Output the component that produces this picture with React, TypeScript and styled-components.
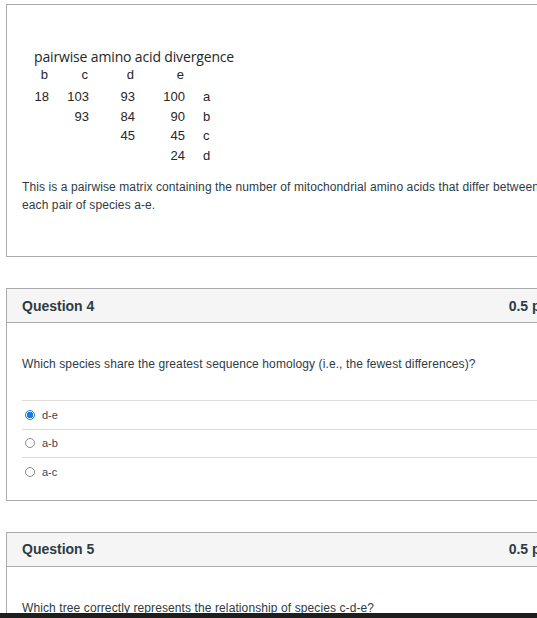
import styled, { createGlobalStyle } from 'styled-components';

const GlobalStyle = createGlobalStyle`
  body {
    margin: 0;
    background: #fff;
    overflow: hidden;
    font-family: "Liberation Sans", Arial, sans-serif;
    color: #2d3b45;
  }
`;

const Page = styled.div`
  padding: 4px 0 0 6px;
  width: 700px;
`;

const Card = styled.div`
  width: 562px;
  border: 1px solid #aaa;
  background: #fff;
  margin-bottom: 31px;
`;

const CardHeader = styled.div`
  display: flex;
  justify-content: space-between;
  align-items: center;
  height: 33px;
  padding: 0 16px 0 15px;
  background: #f5f5f5;
  border-bottom: 1px solid #aaa;
  font-size: 14px;
  font-weight: 700;
`;

const CardBody = styled.div<{ $top?: number; $bottom?: number }>`
  padding: ${(p) => p.$top ?? 32}px 16px ${(p) => p.$bottom ?? 15}px 15px;
`;

const Text = styled.p`
  margin: 0;
  font-size: 12px;
  line-height: 18px;
  letter-spacing: 0.1px;
`;

const Figure = styled.div`
  padding: 43px 0 0 6px;
  margin-bottom: 13px;
  color: #262626;
`;

const FigTitle = styled.div`
  font-family: "Open Sans", sans-serif;
  font-size: 14px;
  line-height: 18px;
  letter-spacing: -0.15px;
  padding-left: 6px;
`;

const Matrix = styled.div`
  display: grid;
  grid-template-columns: 21px 40px 46px 50px 30px;
  grid-template-rows: 21px repeat(4, 19.5px);
  font-size: 13px;
  align-items: center;
`;

const Head = styled.span`
  align-self: start;
  text-align: right;
  padding-right: 1px;
  line-height: 18px;
`;

const Num = styled.span`
  text-align: right;
  line-height: 19.5px;
`;

const RowLabel = styled.span`
  padding-left: 18px;
  line-height: 19.5px;
`;

const Options = styled.div`
  margin-top: 27px;
`;

const Option = styled.label`
  display: flex;
  align-items: center;
  gap: 7px;
  height: 27.5px;
  border-top: 1px solid #ddd;
  padding-left: 3px;
  font-size: 11px;
  color: #3b4650;
`;

const Radio = styled.span<{ $checked?: boolean }>`
  box-sizing: border-box;
  width: 10px;
  height: 10px;
  border-radius: 50%;
  border: 1px solid ${(p) => (p.$checked ? '#1b7ae5' : '#8a8a8a')};
  background: ${(p) =>
    p.$checked ? 'radial-gradient(circle, #1b7ae5 0 3px, #fff 3.5px)' : '#fff'};
`;

const BottomBar = styled.div`
  position: fixed;
  left: 0;
  right: 0;
  bottom: 0;
  height: 5px;
  background: #1e1e1e;
`;

const rows = [
  ['18', '103', '93', '100', 'a'],
  ['', '93', '84', '90', 'b'],
  ['', '', '45', '45', 'c'],
  ['', '', '', '24', 'd'],
];

const answers = [
  { label: 'd-e', checked: true },
  { label: 'a-b', checked: false },
  { label: 'a-c', checked: false },
];

export default function App() {
  return (
    <>
      <GlobalStyle />
      <Page>
        <Card>
          <CardBody $top={0} $bottom={42}>
            <Figure>
              <FigTitle>pairwise amino acid divergence</FigTitle>
              <Matrix>
                <Head>b</Head>
                <Head>c</Head>
                <Head>d</Head>
                <Head>e</Head>
                <Head />
                {rows.map((r, i) =>
                  r.map((v, j) =>
                    j === 4 ? (
                      <RowLabel key={`${i}-${j}`}>{v}</RowLabel>
                    ) : (
                      <Num key={`${i}-${j}`}>{v}</Num>
                    )
                  )
                )}
              </Matrix>
            </Figure>
            <Text>
              This is a pairwise matrix containing the number of mitochondrial
              amino acids that differ between each pair of species a-e.
            </Text>
          </CardBody>
        </Card>

        <Card>
          <CardHeader>
            <span>Question 4</span>
            <span>0.5 pts</span>
          </CardHeader>
          <CardBody $bottom={14}>
            <Text>
              Which species share the greatest sequence homology (i.e., the
              fewest differences)?
            </Text>
            <Options>
              {answers.map((a) => (
                <Option key={a.label}>
                  <Radio $checked={a.checked} />
                  {a.label}
                </Option>
              ))}
            </Options>
          </CardBody>
        </Card>

        <Card>
          <CardHeader>
            <span>Question 5</span>
            <span>0.5 pts</span>
          </CardHeader>
          <CardBody>
            <Text>
              Which tree correctly represents the relationship of species c-d-e?
            </Text>
          </CardBody>
        </Card>
      </Page>
      <BottomBar />
    </>
  );
}
